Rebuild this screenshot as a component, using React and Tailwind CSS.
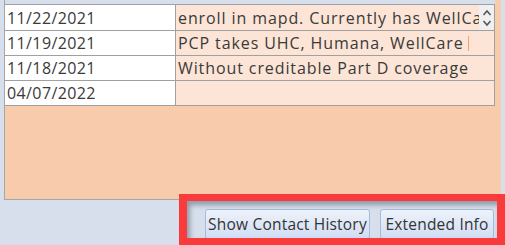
const rows = [
  { date: "11/22/2021", note: "enroll in mapd. Currently has WellCare", scroll: true },
  { date: "11/19/2021", note: "PCP takes UHC, Humana, WellCare", caret: true },
  { date: "11/18/2021", note: "Without creditable Part D coverage" },
  { date: "04/07/2022", note: "" },
];

function ScrollArrows() {
  return (
    <div className="absolute right-0 top-0 flex h-full w-[15px] flex-col items-center justify-center bg-[#f0f0f0]">
      <svg width="10" height="20" viewBox="0 0 10 20" fill="none" stroke="#555" strokeWidth="1.5">
        <path d="M1.5 7 L5 3 L8.5 7" />
        <path d="M1.5 13 L5 17 L8.5 13" />
      </svg>
    </div>
  );
}

export default function App() {
  return (
    <div className="relative h-[245px] w-[505px] overflow-hidden bg-[#d6dfeb] font-['Open_Sans',sans-serif] text-[16px] text-[#3a3a3a]">
      <div className="ml-[4px] flex h-[200px] w-[497px] flex-col border-b border-l border-[#a6a6a6] bg-[#f8cbad]">
        <div className="h-[4px] w-[490px] bg-[#d6dfeb]" />
        <div className="w-[490px] border border-[#a0a0a0] border-l-0">
          {rows.map((r, i) => (
            <div key={i} className={`flex h-[25px] ${i > 0 ? "border-t border-[#a0a0a0]" : ""}`}>
              <div className="flex w-[170px] items-center bg-white pl-[2px] tracking-[0.4px]">{r.date}</div>
              <div className="relative flex flex-1 items-center overflow-hidden whitespace-nowrap border-l border-[#a0a0a0] bg-[#fce4d6] pl-[2px] tracking-[0.9px]">
                {r.note}
                {r.caret && <span className="ml-[4px] h-[15px] w-[1px] bg-[#f4a070]" />}
                {r.scroll && <ScrollArrows />}
              </div>
            </div>
          ))}
        </div>
      </div>

      <div className="flex justify-end gap-[10px] pr-[11px] pt-[9px]">
        <button className="h-[31px] w-[165px] whitespace-nowrap rounded-[3px] border border-[#a4bcd8] bg-gradient-to-b from-[#eef3fb] to-[#cfdcf3] px-0 pt-[1px] text-[15.5px] tracking-[0.2px] text-[#333]">
          Show Contact History
        </button>
        <button className="h-[31px] w-[114px] whitespace-nowrap rounded-[3px] border border-[#a4bcd8] bg-gradient-to-b from-[#eef3fb] to-[#cfdcf3] px-0 pt-[1px] text-[15.5px] tracking-[0.2px] text-[#333]">
          Extended Info
        </button>
      </div>

      <div className="absolute left-[179px] top-[194px] h-[52px] w-[326px] border-[8px] border-t-[7px] border-[#f93b3b] shadow-[inset_3px_4px_5px_rgba(60,70,90,0.45)]" />
    </div>
  );
}
